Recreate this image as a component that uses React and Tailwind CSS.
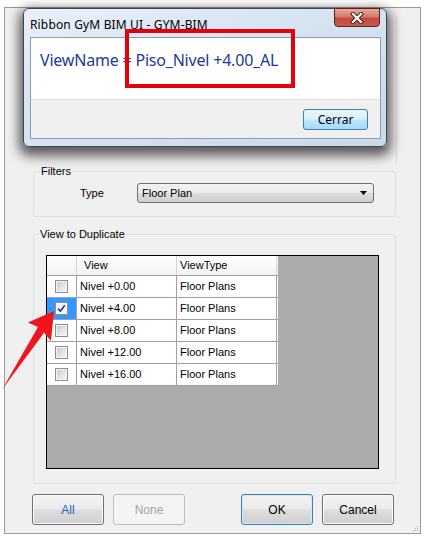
import React from "react";

const rows = [
  { view: "Nivel +0.00", type: "Floor Plans", checked: false },
  { view: "Nivel +4.00", type: "Floor Plans", checked: true },
  { view: "Nivel +8.00", type: "Floor Plans", checked: false },
  { view: "Nivel +12.00", type: "Floor Plans", checked: false },
  { view: "Nivel +16.00", type: "Floor Plans", checked: false },
];

function CheckBox({ checked }) {
  return (
    <div className="w-[13px] h-[13px] border border-[#8e8f8f] bg-white flex items-center justify-center">
      <div
        className={
          checked
            ? "w-[11px] h-[11px] bg-[linear-gradient(135deg,#f4f4f4,#ffffff)] flex items-center justify-center"
            : "w-[11px] h-[11px] border border-[#f4f4f4] bg-[linear-gradient(135deg,#cbcbcb,#f6f6f6)]"
        }
      >
        {checked && (
          <svg width="9" height="9" viewBox="0 0 9 9">
            <path d="M1.2 4.6 L3.4 7.2 L7.8 1.2" fill="none" stroke="#2a3a8f" strokeWidth="1.7" />
          </svg>
        )}
      </div>
    </div>
  );
}

function WinButton({ children, variant }) {
  let cls =
    "w-[72px] h-[31px] rounded-[3px] border flex items-center justify-center text-[12px] ";
  if (variant === "disabled") {
    cls += "border-[#b9bdc0] bg-[#f4f4f4] text-[#a3a3a3]";
  } else if (variant === "focus") {
    cls +=
      "border-[#3c7fb1] bg-[linear-gradient(#f2f2f2_0%,#ebebeb_48%,#dddddd_52%,#cfcfcf_100%)] text-black shadow-[inset_0_0_0_1px_#cfeaf9]";
  } else if (variant === "blue") {
    cls +=
      "border-[#707070] bg-[linear-gradient(#f2f2f2_0%,#ebebeb_48%,#dddddd_52%,#cfcfcf_100%)] text-[#1f5fc8] shadow-[inset_0_0_0_1px_#fbfbfb]";
  } else {
    cls +=
      "border-[#707070] bg-[linear-gradient(#f2f2f2_0%,#ebebeb_48%,#dddddd_52%,#cfcfcf_100%)] text-black shadow-[inset_0_0_0_1px_#fbfbfb]";
  }
  return <div className={cls}>{children}</div>;
}

export default function App() {
  return (
    <div className="relative w-[424px] h-[541px] bg-white overflow-hidden font-['Liberation_Sans',Arial,sans-serif] text-[11px] text-black">
      {/* Main dialog */}
      <div className="ml-[4px] mt-[7px] w-[417px] h-[527px] border border-[#9a9a9a] bg-[#f0f0f0] flex flex-col pl-[28px] pr-[23px] relative">
        {/* hidden top panel (behind popup) */}
        <div className="mt-[8px] h-[149px] w-[364px] border-r border-[#dadada]"></div>

        {/* Filters */}
        <fieldset className="border border-[#d9dfe3] rounded-[3px] h-[52px] w-[363px] relative">
          <legend className="ml-[6px] px-[1px] leading-[13px]">Filters</legend>
          <div className="flex items-center mt-[5px]">
            <div className="w-[103px] pl-[46px]">Type</div>
            <div className="w-[237px] h-[20px] border border-[#707070] rounded-[3px] bg-[linear-gradient(#f2f2f2_0%,#ebebeb_48%,#dddddd_52%,#cfcfcf_100%)] flex items-center justify-between pl-[4px] pr-[6px]">
              <span>Floor Plan</span>
              <svg width="7" height="4" viewBox="0 0 7 4">
                <path d="M0 0 L7 0 L3.5 4 Z" fill="#000" />
              </svg>
            </div>
          </div>
        </fieldset>

        {/* View to Duplicate */}
        <fieldset className="mt-[11px] border border-[#d9dfe3] rounded-[3px] h-[256px] w-[363px]">
          <legend className="ml-[5px] px-[1px] leading-[13px]">View to Duplicate</legend>
          <div className="ml-[12px] mt-[14px] w-[333px] h-[214px] border border-black bg-[#ababab]">
            <div className="w-[231px] flex flex-col">
              {/* header */}
              <div className="flex h-[20px] bg-[linear-gradient(#ffffff,#f1f2f4)] border-b border-[#a0a0a0]">
                <div className="w-[30px] border-r border-[#d5d5d5]"></div>
                <div className="w-[100px] border-r border-[#d5d5d5] pl-[7px] flex items-center">View</div>
                <div className="w-[100px] border-r border-[#d5d5d5] pl-[3px] flex items-center">ViewType</div>
              </div>
              {rows.map((r) => (
                <div key={r.view} className="flex h-[22px] bg-white border-b border-[#a0a0a0]">
                  <div
                    className={
                      "w-[30px] border-r border-[#a0a0a0] flex items-center justify-center " +
                      (r.checked ? "bg-[#3399ff]" : "bg-white")
                    }
                  >
                    <CheckBox checked={r.checked} />
                  </div>
                  <div className="w-[100px] border-r border-[#a0a0a0] pl-[3px] flex items-center">{r.view}</div>
                  <div className="w-[100px] border-r border-[#a0a0a0] pl-[3px] flex items-center">{r.type}</div>
                </div>
              ))}
            </div>
          </div>
        </fieldset>

        {/* Buttons */}
        <div className="flex mt-[10px] ml-[-1px]">
          <WinButton variant="blue">All</WinButton>
          <div className="ml-[9px]">
            <WinButton variant="disabled">None</WinButton>
          </div>
          <div className="ml-[56px]">
            <WinButton variant="focus">OK</WinButton>
          </div>
          <div className="ml-[9px]">
            <WinButton>Cancel</WinButton>
          </div>
        </div>

        {/* resize grip */}
        <div className="absolute right-[2px] bottom-[2px] grid grid-cols-3 gap-[1px]">
          <span className="w-[1px] h-[1px]"></span>
          <span className="w-[1px] h-[1px]"></span>
          <span className="w-[1px] h-[1px] bg-[#b0b0b0]"></span>
          <span className="w-[1px] h-[1px]"></span>
          <span className="w-[1px] h-[1px] bg-[#b0b0b0]"></span>
          <span className="w-[1px] h-[1px] bg-[#b0b0b0]"></span>
          <span className="w-[1px] h-[1px] bg-[#b0b0b0]"></span>
          <span className="w-[1px] h-[1px] bg-[#b0b0b0]"></span>
          <span className="w-[1px] h-[1px] bg-[#b0b0b0]"></span>
        </div>
      </div>

      {/* Popup window */}
      <div className="absolute left-[23px] top-[8px] w-[364px] h-[139px] rounded-[6px] border border-[#3d4650] bg-[linear-gradient(160deg,#e9f1fa_0%,#d7e4f2_40%,#c9d9ea_100%)] shadow-[0_5px_12px_4px_rgba(0,0,0,0.62)] flex flex-col font-['Noto_Sans','Open_Sans',sans-serif]">
        <div className="h-[28px] flex items-center pl-[6px] text-[12px] text-black relative">
          <span className="mt-[3px] tracking-[0.15px]">Ribbon GyM BIM UI - GYM-BIM</span>
          {/* close button */}
          <div className="absolute right-[6px] top-[-1px] w-[46px] h-[19px] rounded-b-[4px] border border-[#5a1e1e] bg-[linear-gradient(#e9a99c_0%,#d27a6a_45%,#c24b3f_55%,#c75a4b_100%)] flex items-center justify-center">
            <svg width="14" height="12" viewBox="0 0 14 12">
              <path d="M3 2 L11 10 M11 2 L3 10" stroke="#4a2020" strokeWidth="4.2" strokeLinecap="square" />
              <path d="M3 2 L11 10 M11 2 L3 10" stroke="#ffffff" strokeWidth="2.2" strokeLinecap="square" />
            </svg>
          </div>
        </div>
        <div className="ml-[6px] mr-[5px] h-[102px] border border-[#8a9db2] flex flex-col">
          <div className="h-[61px] bg-white pl-[9px] pt-[11px]">
            <span className="text-[16px] tracking-[-0.2px] text-[#1e3a96] leading-[22px]">ViewName = Piso_Nivel +4.00_AL</span>
          </div>
          <div className="flex-1 bg-[#f0f0f0] border-t border-[#dfdfdf] flex justify-end items-start pr-[12px] pt-[9px]">
            <div className="w-[65px] h-[21px] rounded-[3px] border border-[#3c7fb1] bg-[linear-gradient(#eaf6fd_0%,#d9f0fc_48%,#bee6fd_52%,#a7d9f5_100%)] flex items-center justify-center text-[12px] text-black">
              Cerrar
            </div>
          </div>
        </div>
      </div>

      {/* Red highlight box */}
      <div className="absolute left-[125px] top-[29px] w-[170px] h-[59px] border-[4px] border-[#e6000a]"></div>

      {/* Red arrow */}
      <svg className="absolute left-0 top-[305px]" width="60" height="90" viewBox="0 305 60 90">
        <path
          d="M54 311 L28 322.5 L38 327 C28 345 14 368 2 390 C16 370 32 350 44 332.5 L51 341 Z"
          fill="#f0141e"
        />
      </svg>
    </div>
  );
}
